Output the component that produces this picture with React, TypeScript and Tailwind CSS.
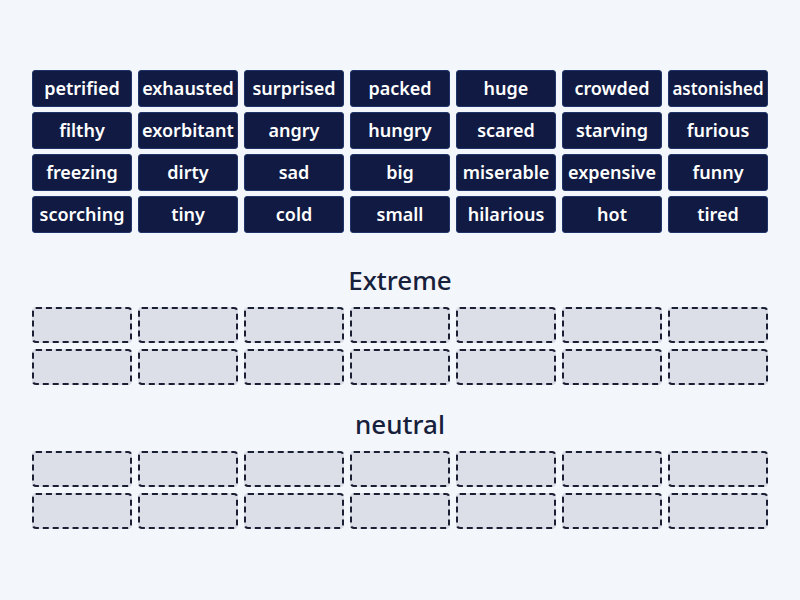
import React from 'react'

const words = [
  'petrified', 'exhausted', 'surprised', 'packed', 'huge', 'crowded', 'astonished',
  'filthy', 'exorbitant', 'angry', 'hungry', 'scared', 'starving', 'furious',
  'freezing', 'dirty', 'sad', 'big', 'miserable', 'expensive', 'funny',
  'scorching', 'tiny', 'cold', 'small', 'hilarious', 'hot', 'tired',
]

function Tile({ word }: { word: string }) {
  const small = word.length > 10 || word === 'astonished'
  return (
    <div
      className={`h-[37px] flex items-center justify-center rounded-[3px] bg-[#111a42] border border-[#1f3468] text-white font-semibold whitespace-nowrap ${
        small ? 'text-[17px]' : 'text-[18px]'
      }`}
    >
      {word}
    </div>
  )
}

function DropZone() {
  return <div className="h-[36px] rounded-[4px] border-2 border-dashed border-[#1a1f33] bg-[#dcdfe8]" />
}

function Group({ title }: { title: string }) {
  return (
    <div>
      <h2 className="text-center text-[26px] font-medium text-[#16203a] leading-[30px]">{title}</h2>
      <div className="mt-[12px] grid grid-cols-7 gap-x-[6px] gap-y-[6px]">
        {Array.from({ length: 14 }).map((_, i) => (
          <DropZone key={i} />
        ))}
      </div>
    </div>
  )
}

export default function App() {
  return (
    <main
      className="w-[800px] h-[600px] bg-[#f3f6fb] px-[32px] pt-[70px]"
      style={{ fontFamily: '"Noto Sans", "Open Sans", sans-serif' }}
    >
      <div className="grid grid-cols-7 gap-x-[6px] gap-y-[5px]">
        {words.map((w) => (
          <Tile key={w} word={w} />
        ))}
      </div>

      <div className="mt-[32px]">
        <Group title="Extreme" />
      </div>
      <div className="mt-[24px]">
        <Group title="neutral" />
      </div>
    </main>
  )
}
